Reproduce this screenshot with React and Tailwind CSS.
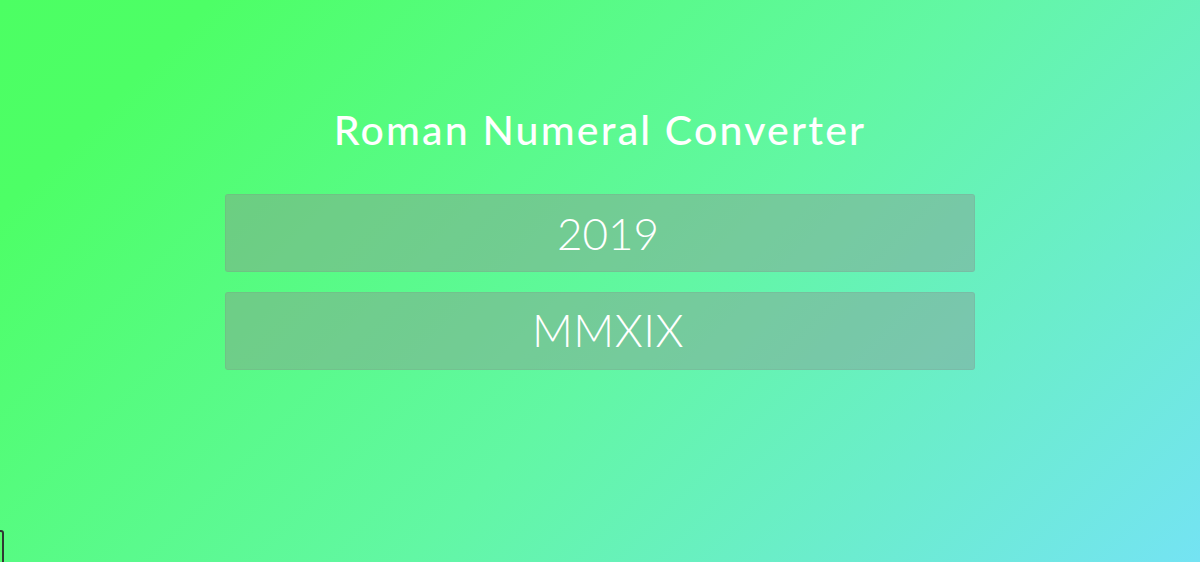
import React, { useState } from 'react';

const toRoman = (num) => {
  const map = [
    [1000, 'M'], [900, 'CM'], [500, 'D'], [400, 'CD'], [100, 'C'], [90, 'XC'],
    [50, 'L'], [40, 'XL'], [10, 'X'], [9, 'IX'], [5, 'V'], [4, 'IV'], [1, 'I'],
  ];
  let n = parseInt(num, 10);
  if (!n || n < 1) return '';
  let out = '';
  for (const [v, s] of map) {
    while (n >= v) {
      out += s;
      n -= v;
    }
  }
  return out;
};

const App = () => {
  const [value, setValue] = useState('2019');

  return (
    <div
      className="relative w-full h-[562px] overflow-hidden flex flex-col items-center bg-[linear-gradient(135deg,#4cff63_0%,#4dff66_12%,#62f7a4_55%,#74e3f3_100%)] text-white"
      style={{ fontFamily: 'Lato, "Noto Sans", sans-serif' }}
    >
      <h1 className="mt-[106px] text-[41px] leading-[48px] font-medium tracking-[2.2px]">
        Roman Numeral Converter
      </h1>

      <div className="mt-[40px] w-[750px] flex flex-col gap-[20px]">
        <input
          value={value}
          onChange={(e) => setValue(e.target.value)}
          className="w-full h-[78px] pl-[16px] rounded-[3px] bg-[rgba(142,142,142,0.42)] border border-[rgba(120,120,120,0.12)] text-center text-[44px] font-light text-white outline-none"
        />
        <div className="w-full h-[78px] pl-[16px] rounded-[3px] bg-[rgba(142,142,142,0.42)] border border-[rgba(120,120,120,0.12)] flex items-center justify-center text-[45px] font-light tracking-[0.5px]">
          {toRoman(value)}
        </div>
      </div>

      <div className="absolute left-[-6px] bottom-[-4px] w-[10px] h-[36px] rounded-[3px] border-[2px] border-[#2f3a34] bg-[#56fa6e]" />
    </div>
  );
};

export default App;
